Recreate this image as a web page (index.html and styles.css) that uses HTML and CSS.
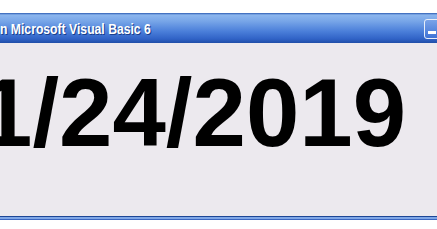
FILE: index.html
```html
<!DOCTYPE html>
<html>
<head>
<meta charset="utf-8">
<link rel="stylesheet" href="styles.css">
</head>
<body>
<div class="window">
  <div class="titlebar">
    <span class="title">n Microsoft Visual Basic 6</span>
    <span class="minbtn"><span class="dash"></span></span>
  </div>
  <div class="content">
    <div class="date">1/24/2019</div>
  </div>
  <div class="frame-bottom"></div>
</div>
</body>
</html>
```
FILE: styles.css
```css
html, body {
  margin: 0;
  padding: 0;
  background: #ffffff;
  overflow: hidden;
}
.window {
  margin-top: 13px;
  width: 100%;
}
.titlebar {
  height: 30px;
  display: flex;
  align-items: center;
  justify-content: space-between;
  background: linear-gradient(#2c5cb2 0px, #8cb6ee 2px, #78a6e8 8px, #4c80da 18px, #3062c6 26px, #1f4ea8 30px);
  overflow: hidden;
}
.title {
  display: inline-block;
  font-family: "Liberation Sans", Arial, sans-serif;
  font-weight: bold;
  font-size: 12.2px;
  color: #ffffff;
  margin-left: 0px;
  margin-top: 1px;
  transform: scaleY(1.15);
  text-shadow: 1px 1px 0 #1a3f8c;
  white-space: nowrap;
}
.minbtn {
  width: 20px;
  height: 20px;
  margin-right: -7px;
  margin-top: 2px;
  box-sizing: border-box;
  border: 1px solid #e8eef8;
  border-radius: 3px;
  background: linear-gradient(#7aa3e8, #3f73d6);
  display: flex;
  align-items: flex-end;
  padding: 0 0 4px 3px;
}
.dash {
  width: 8px;
  height: 3px;
  background: #ffffff;
}
.content {
  height: 173px;
  background: #ece9ee;
  overflow: hidden;
}
.date {
  font-family: "Liberation Sans", Arial, sans-serif;
  font-weight: bold;
  font-size: 96px;
  line-height: 1;
  color: #000000;
  margin-top: 22px;
  margin-left: -21px;
  white-space: nowrap;
}
.frame-bottom {
  height: 4px;
  background: linear-gradient(#1d4696 0, #1d4696 1px, #7ea6e6 1px, #7ea6e6 3px, #3a66c0 3px);
}
```
